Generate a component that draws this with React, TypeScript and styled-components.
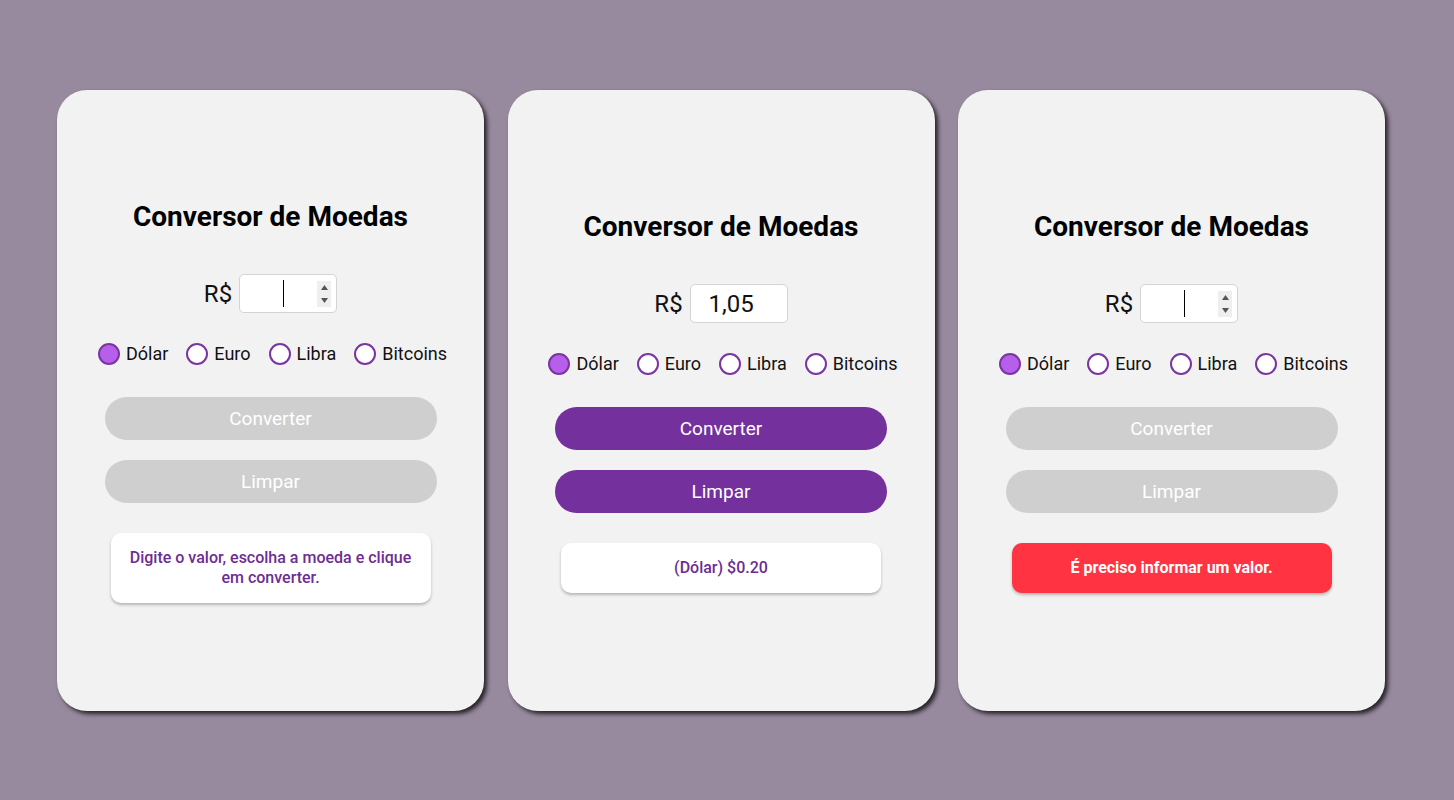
import React from "react";
import styled, { createGlobalStyle } from "styled-components";

const Global = createGlobalStyle`
  html, body { margin: 0; padding: 0; }
  body {
    background: #97899e;
    font-family: Roboto, "Noto Sans", "Liberation Sans", sans-serif;
    width: 1454px;
    height: 800px;
    overflow: hidden;
  }
`;

const Page = styled.main`
  display: flex;
  gap: 23.5px;
  padding: 90px 0 0 57px;
`;

const Card = styled.section`
  width: 427px;
  height: 621px;
  box-sizing: border-box;
  padding-top: 4px;
  background: #f2f2f2;
  border-radius: 30px;
  box-shadow: 3px 3px 4px rgba(0, 0, 0, 0.75);
  display: flex;
  flex-direction: column;
  align-items: center;
  justify-content: center;
`;

const Title = styled.h1`
  margin: 0;
  font-size: 28px;
  line-height: 30px;
  font-weight: 700;
  color: #000;
`;

const InputRow = styled.div`
  margin-top: 42px;
  display: flex;
  align-items: center;
  gap: 7px;
  height: 39px;
`;

const Currency = styled.span`
  font-size: 24px;
  color: #111;
`;

const InputBox = styled.div`
  position: relative;
  width: 98px;
  height: 39px;
  box-sizing: border-box;
  background: #fff;
  border: 1px solid #d4d4d4;
  border-radius: 5px;
  display: flex;
  align-items: center;
  justify-content: center;
  padding-right: 15px;
`;

const ValueText = styled.span`
  font-size: 24px;
  color: #111;
`;

const Caret = styled.span`
  display: block;
  width: 1.5px;
  height: 27px;
  background: #000;
  margin-left: 6px;
`;

const Spinner = styled.div`
  position: absolute;
  right: 5px;
  top: 6px;
  width: 14px;
  height: 26px;
  background: #efefef;
  display: flex;
  flex-direction: column;
  align-items: center;
  justify-content: space-around;
`;

const Radios = styled.div`
  margin-top: 30px;
  display: flex;
  align-items: center;
  gap: 18px;
  padding-left: 4px;
`;

const RadioLabel = styled.label`
  display: flex;
  align-items: center;
  gap: 6px;
  font-size: 18px;
  line-height: 22px;
  color: #111;
`;

const RadioDot = styled.span<{ $checked?: boolean }>`
  width: 22px;
  height: 22px;
  box-sizing: border-box;
  border-radius: 50%;
  border: 2px solid #7a35a1;
  background: ${(p) => (p.$checked ? "#b65fea" : "#fff")};
`;

const Button = styled.button<{ $active?: boolean; $first?: boolean }>`
  width: 332px;
  height: 43px;
  border: none;
  border-radius: 22px;
  font-family: inherit;
  font-size: 19px;
  color: #fff;
  background: ${(p) => (p.$active ? "#74309c" : "#cfcfcf")};
  margin-top: ${(p) => (p.$first ? "32px" : "20px")};
`;

const Message = styled.div<{ $error?: boolean }>`
  margin-top: 30px;
  width: 320px;
  box-sizing: border-box;
  padding: 15px 16px;
  min-height: 50px;
  border-radius: 10px;
  background: ${(p) => (p.$error ? "#ff3341" : "#fff")};
  color: ${(p) => (p.$error ? "#fff" : "#6c2d94")};
  font-weight: ${(p) => (p.$error ? 700 : 500)};
  font-size: 16px;
  line-height: 20px;
  text-align: center;
  box-shadow: 0 2px 3px rgba(0, 0, 0, 0.25);
`;

const Arrow = ({ up }: { up?: boolean }) => (
  <svg width="7" height="5" viewBox="0 0 7 5">
    <path d={up ? "M0 5 L3.5 0 L7 5 Z" : "M0 0 L3.5 5 L7 0 Z"} fill="#555" />
  </svg>
);

type CardProps = {
  value?: string;
  focused?: boolean;
  active?: boolean;
  message: string;
  error?: boolean;
};

const currencies = ["Dólar", "Euro", "Libra", "Bitcoins"];

function Converter({ value, focused, active, message, error }: CardProps) {
  return (
    <Card>
      <Title>Conversor de Moedas</Title>
      <InputRow>
        <Currency>R$</Currency>
        <InputBox>
          {value ? <ValueText>{value}</ValueText> : focused ? <Caret /> : null}
          {focused && (
            <Spinner>
              <Arrow up />
              <Arrow />
            </Spinner>
          )}
        </InputBox>
      </InputRow>
      <Radios>
        {currencies.map((c, i) => (
          <RadioLabel key={c}>
            <RadioDot $checked={i === 0} />
            {c}
          </RadioLabel>
        ))}
      </Radios>
      <Button $active={active} $first>
        Converter
      </Button>
      <Button $active={active}>Limpar</Button>
      <Message $error={error}>{message}</Message>
    </Card>
  );
}

export default function App() {
  return (
    <>
      <Global />
      <Page>
        <Converter focused message="Digite o valor, escolha a moeda e clique em converter." />
        <Converter value="1,05" active message="(Dólar) $0.20" />
        <Converter focused error message="É preciso informar um valor." />
      </Page>
    </>
  );
}
